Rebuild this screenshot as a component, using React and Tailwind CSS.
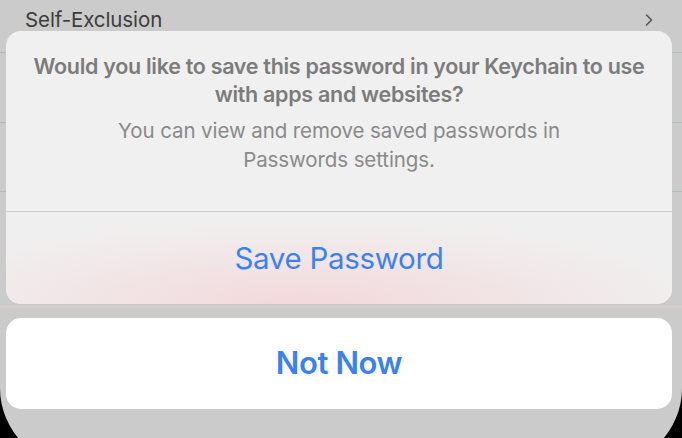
export default function App() {
  const rows = ["Self-Exclusion", "", "", "", "", ""];

  return (
    <div className="relative h-[438px] w-[682px] overflow-hidden bg-black font-['Inter',sans-serif]">
      {/* BACKDROP SCREEN */}
      <div className="h-[466px] bg-[#cbcbcb] rounded-b-[78px] overflow-hidden">
        <div className="flex h-[53px] items-start justify-between pl-[25px] pr-[28px] pt-[5px] border-b border-[#b3b7c0]">
          <span className="text-[20.5px] leading-[30px] text-[#3d3d3d] tracking-[-0.1px]">{rows[0]}</span>
          <svg width="10" height="14" viewBox="0 0 10 14" className="mt-[8px]">
            <path d="M2.5 2 L7.5 7 L2.5 12" fill="none" stroke="#555" strokeWidth="1.6" strokeLinecap="round" strokeLinejoin="round" />
          </svg>
        </div>
        <div className="h-[70px] border-b border-[#b3b7c0]" />
        <div className="h-[69px] border-b border-[#b3b7c0]" />
        <div className="h-[70px]" />
        <div className="mt-[44px] h-[1px] bg-[#e6c8cc]" />
      </div>

      {/* ACTION SHEET */}
      <div className="absolute left-[6px] right-[10px] top-[31px] flex flex-col gap-[14px]">
        <div className="overflow-hidden rounded-[15px] bg-[#f0f0f0]">
          <div className="flex h-[181px] flex-col items-center px-2 pt-[21px] text-center border-b border-[#cfcfcf]">
            <p className="text-[21.5px] font-semibold leading-[28px] text-[#7c7c7c] tracking-[-0.3px] whitespace-nowrap">
              Would you like to save this password in your Keychain to use
              <br />
              with apps and websites?
            </p>
            <p className="mt-[8px] text-[20.5px] leading-[29px] text-[#8a8a8a] tracking-[-0.1px] whitespace-nowrap">
              You can view and remove saved passwords in
              <br />
              Passwords settings.
            </p>
          </div>
          <button className="flex h-[92px] w-full items-center justify-center bg-[radial-gradient(ellipse_60%_90%_at_45%_100%,#f3d9db,#f0efef)] text-[29.5px] text-[#3a82f2] tracking-[-0.3px]">
            Save Password
          </button>
        </div>

        <button className="flex h-[91px] w-full items-center justify-center rounded-[15px] bg-white text-[31px] font-semibold text-[#3a82f2] tracking-[-0.4px]">
          Not Now
        </button>
      </div>
    </div>
  );
}
